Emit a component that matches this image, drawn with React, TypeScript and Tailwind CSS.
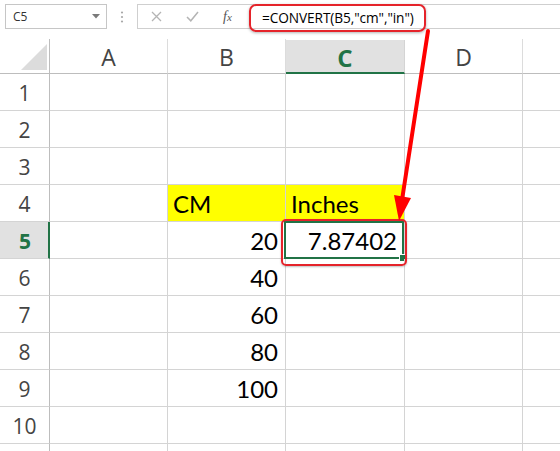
import React from "react";

const cols = [
  { k: "A", w: "w-[118px]", label: "A" },
  { k: "B", w: "w-[118px]", label: "B" },
  { k: "C", w: "w-[119px]", label: "C" },
  { k: "D", w: "w-[118px]", label: "D" },
  { k: "E", w: "w-[118px]", label: "" },
];

const data: Record<string, { v: string; align: "l" | "r"; yellow?: boolean }> = {
  B4: { v: "CM", align: "l", yellow: true },
  C4: { v: "Inches", align: "l", yellow: true },
  B5: { v: "20", align: "r" },
  C5: { v: "7.87402", align: "r" },
  B6: { v: "40", align: "r" },
  B7: { v: "60", align: "r" },
  B8: { v: "80", align: "r" },
  B9: { v: "100", align: "r" },
};

export default function App() {
  const rows = Array.from({ length: 11 }, (_, i) => i + 1);
  return (
    <div className="relative w-[560px] h-[451px] overflow-hidden bg-white font-['Open_Sans',sans-serif]">
      {/* Formula bar */}
      <div className="flex h-[39px] items-start pt-[4px]">
        <div className="ml-[5px] flex h-[25px] w-[102px] shrink-0 items-center justify-between border border-[#c6c6c6] pl-[7px] pr-[6px]">
          <span className="text-[12px] text-[#333] leading-none pt-[1px]">C5</span>
          <svg width="8" height="5" viewBox="0 0 8 5">
            <polygon points="0,0 8,0 4,4.5" fill="#7a7a7a" />
          </svg>
        </div>
        <div className="flex h-[25px] w-[30px] shrink-0 items-center justify-center">
          <svg width="4" height="12" viewBox="0 0 4 12">
            <circle cx="2" cy="1.5" r="1.1" fill="#a8a8a8" />
            <circle cx="2" cy="6" r="1.1" fill="#a8a8a8" />
            <circle cx="2" cy="10.5" r="1.1" fill="#a8a8a8" />
          </svg>
        </div>
        <div className="flex h-[25px] flex-1 items-center border-y border-l border-[#cfcfcf]">
          <div className="flex h-full w-[110px] shrink-0 items-center">
            <svg className="ml-[13px]" width="11" height="11" viewBox="0 0 11 11">
              <path d="M1 1 L10 10 M10 1 L1 10" stroke="#b4b4b4" strokeWidth="1.3" fill="none" />
            </svg>
            <svg className="ml-[24px]" width="13" height="11" viewBox="0 0 13 11">
              <path d="M1 6 L4.8 9.8 L12 1" stroke="#b4b4b4" strokeWidth="1.5" fill="none" />
            </svg>
            <span className="ml-[24px] font-['Liberation_Serif',serif] italic text-[14px] text-[#555] leading-none">
              f<span className="text-[11px]">x</span>
            </span>
          </div>
          <span className="ml-[14px] pt-[2px] text-[13.7px] tracking-[-0.1px] text-black leading-none whitespace-nowrap">
            =CONVERT(B5,"cm","in")
          </span>
        </div>
      </div>

      {/* Column header row */}
      <div className="flex h-[35px]">
        <div className="relative h-full w-[50px] shrink-0 border-r border-b border-[#bdbdbd]">
          <svg className="absolute left-0 top-0" width="50" height="35" viewBox="0 0 50 35">
            <polygon points="47,5 47,31 21,31" fill="#dcdcdc" />
          </svg>
        </div>
        {cols.map((c) =>
          c.k === "C" ? (
            <div
              key={c.k}
              className={`${c.w} mt-[1px] flex h-[34px] shrink-0 items-center justify-center border-r border-b-2 border-r-[#d4d4d4] border-b-[#217346] bg-[#e1e1e1] pt-[3px] text-[24px] font-bold text-[#217346] leading-none`}
            >
              {c.label}
            </div>
          ) : (
            <div
              key={c.k}
              className={`${c.w} flex h-full shrink-0 items-center justify-center border-r border-b border-r-[#dcdcdc] border-b-[#bdbdbd] pt-[3px] text-[23px] text-[#444] leading-none`}
            >
              {c.label}
            </div>
          )
        )}
      </div>

      {/* Body rows */}
      {rows.map((r) => (
        <div key={r} className="flex h-[37px]">
          {r === 5 ? (
            <div className="flex h-full w-[50px] shrink-0 items-center justify-center border-r-2 border-b border-r-[#217346] border-b-[#d4d4d4] bg-[#e1e1e1] pt-[3px] pl-[2px] text-[21px] font-bold text-[#217346] leading-none">
              {r}
            </div>
          ) : (
            <div className="flex h-full w-[50px] shrink-0 items-center justify-center border-r border-b border-r-[#bdbdbd] border-b-[#d4d4d4] pt-[3px] text-[21px] text-[#444] leading-none">
              {r <= 10 ? r : ""}
            </div>
          )}
          {cols.map((c) => {
            const id = `${c.k}${r}`;
            const d = data[id];
            const selected = id === "C5";
            return (
              <div
                key={id}
                className={`${c.w} relative flex h-full shrink-0 border-r border-b border-[#d4d4d4] font-['Lato',sans-serif] text-[24px] leading-[36px] text-black pt-[1px] ${
                  d?.yellow ? "bg-[#ffff00]" : ""
                } ${d?.align === "r" ? "justify-end pr-[7px]" : "justify-start pl-[5px]"}`}
              >
                {d?.v}
                {selected && (
                  <>
                    <div className="absolute -left-[2px] -top-[1px] right-0 -bottom-[1px] border-2 border-[#217346]" />
                    <div className="absolute -right-[3px] -bottom-[4px] h-[6px] w-[6px] border border-white bg-[#217346] box-content" />
                  </>
                )}
              </div>
            );
          })}
        </div>
      ))}

      {/* Annotations */}
      <div className="pointer-events-none absolute left-[249px] top-[4px] h-[28px] w-[177px] rounded-[7px] border-2 border-[#e5232a] shadow-[0_1px_3px_rgba(0,0,0,0.3)]" />
      <div className="pointer-events-none absolute left-[281px] top-[219px] h-[47px] w-[126px] rounded-[5px] border-2 border-[#e5232a] shadow-[0_1px_2px_rgba(0,0,0,0.25)]" />
      <svg
        className="pointer-events-none absolute left-0 top-0"
        width="560"
        height="451"
        viewBox="0 0 560 451"
      >
        <line x1="428" y1="31" x2="402" y2="200" stroke="#ff0000" strokeWidth="4" strokeLinecap="round" />
        <polygon points="394,195 411,198 399,221" fill="#ff0000" />
      </svg>
    </div>
  );
}
